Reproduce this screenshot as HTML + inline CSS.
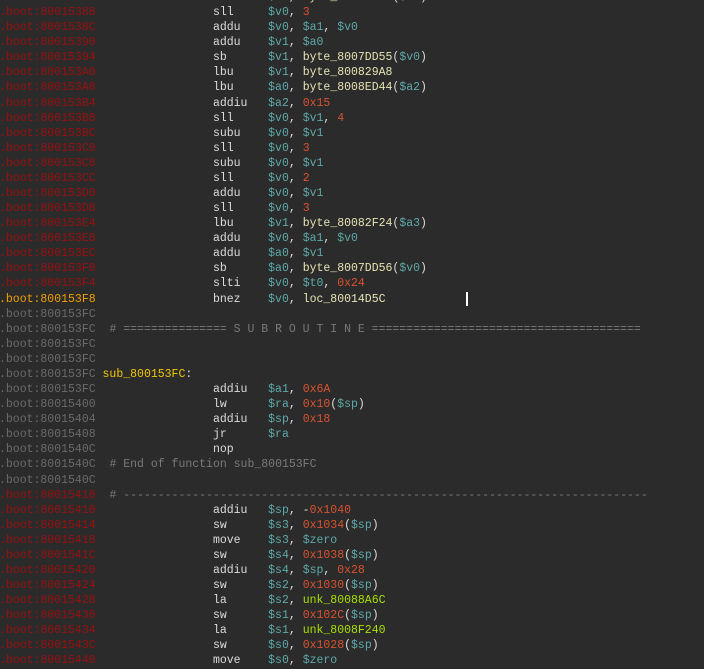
<!DOCTYPE html>
<html><head><meta charset="utf-8"><style>
html,body{margin:0;padding:0;background:#2b2b2b;width:704px;height:666px;overflow:hidden}
#c{position:absolute;left:-1px;top:-10px;font-family:"Liberation Mono",monospace;font-size:11.5px;line-height:15.08px;white-space:pre;color:#dcdcdc}
.r{color:#9a0f0f}.g{color:#6a6a6a}.o{color:#f0a000}
.m{color:#dcdcdc}.x{color:#5fa9a9}.n{color:#d9522f}.y{color:#e6e3b2}.u{color:#a8e000}.l{color:#f0c800}.k{color:#7a7a7a}
#cur{position:absolute;left:466px;top:292px;width:2px;height:14px;background:#fff}
</style></head><body><div id="c"><span class="r">.boot:8001537C</span>                 <span class="m">lbu</span>     <span class="x">$v1</span>, <span class="y">byte_8008ED43</span>(<span class="x">$a2</span>)
<span class="r">.boot:80015388</span>                 sll     <span class="x">$v0</span>, <span class="n">3</span>
<span class="r">.boot:8001538C</span>                 addu    <span class="x">$v0</span>, <span class="x">$a1</span>, <span class="x">$v0</span>
<span class="r">.boot:80015390</span>                 addu    <span class="x">$v1</span>, <span class="x">$a0</span>
<span class="r">.boot:80015394</span>                 sb      <span class="x">$v1</span>, <span class="y">byte_8007DD55</span>(<span class="x">$v0</span>)
<span class="r">.boot:800153A0</span>                 lbu     <span class="x">$v1</span>, <span class="y">byte_800829A8</span>
<span class="r">.boot:800153A8</span>                 lbu     <span class="x">$a0</span>, <span class="y">byte_8008ED44</span>(<span class="x">$a2</span>)
<span class="r">.boot:800153B4</span>                 addiu   <span class="x">$a2</span>, <span class="n">0x15</span>
<span class="r">.boot:800153B8</span>                 sll     <span class="x">$v0</span>, <span class="x">$v1</span>, <span class="n">4</span>
<span class="r">.boot:800153BC</span>                 subu    <span class="x">$v0</span>, <span class="x">$v1</span>
<span class="r">.boot:800153C0</span>                 sll     <span class="x">$v0</span>, <span class="n">3</span>
<span class="r">.boot:800153C8</span>                 subu    <span class="x">$v0</span>, <span class="x">$v1</span>
<span class="r">.boot:800153CC</span>                 sll     <span class="x">$v0</span>, <span class="n">2</span>
<span class="r">.boot:800153D0</span>                 addu    <span class="x">$v0</span>, <span class="x">$v1</span>
<span class="r">.boot:800153D8</span>                 sll     <span class="x">$v0</span>, <span class="n">3</span>
<span class="r">.boot:800153E4</span>                 lbu     <span class="x">$v1</span>, <span class="y">byte_80082F24</span>(<span class="x">$a3</span>)
<span class="r">.boot:800153E8</span>                 addu    <span class="x">$v0</span>, <span class="x">$a1</span>, <span class="x">$v0</span>
<span class="r">.boot:800153EC</span>                 addu    <span class="x">$a0</span>, <span class="x">$v1</span>
<span class="r">.boot:800153F0</span>                 sb      <span class="x">$a0</span>, <span class="y">byte_8007DD56</span>(<span class="x">$v0</span>)
<span class="r">.boot:800153F4</span>                 slti    <span class="x">$v0</span>, <span class="x">$t0</span>, <span class="n">0x24</span>
<span class="o">.boot:800153F8</span>                 bnez    <span class="x">$v0</span>, <span class="y">loc_80014D5C</span>
<span class="g">.boot:800153FC</span>
<span class="g">.boot:800153FC</span>  <span class="k"># =============== S U B R O U T I N E =======================================</span>
<span class="g">.boot:800153FC</span>
<span class="g">.boot:800153FC</span>
<span class="g">.boot:800153FC</span> <span class="l">sub_800153FC</span>:
<span class="g">.boot:800153FC</span>                 addiu   <span class="x">$a1</span>, <span class="n">0x6A</span>
<span class="g">.boot:80015400</span>                 lw      <span class="x">$ra</span>, <span class="n">0x10</span>(<span class="x">$sp</span>)
<span class="g">.boot:80015404</span>                 addiu   <span class="x">$sp</span>, <span class="n">0x18</span>
<span class="g">.boot:80015408</span>                 jr      <span class="x">$ra</span>
<span class="g">.boot:8001540C</span>                 nop
<span class="g">.boot:8001540C</span>  <span class="k"># End of function sub_800153FC</span>
<span class="g">.boot:8001540C</span>
<span class="r">.boot:80015410</span>  <span class="k"># ----------------------------------------------------------------------------</span>
<span class="r">.boot:80015410</span>                 addiu   <span class="x">$sp</span>, -<span class="n">0x1040</span>
<span class="r">.boot:80015414</span>                 sw      <span class="x">$s3</span>, <span class="n">0x1034</span>(<span class="x">$sp</span>)
<span class="r">.boot:80015418</span>                 move    <span class="x">$s3</span>, <span class="x">$zero</span>
<span class="r">.boot:8001541C</span>                 sw      <span class="x">$s4</span>, <span class="n">0x1038</span>(<span class="x">$sp</span>)
<span class="r">.boot:80015420</span>                 addiu   <span class="x">$s4</span>, <span class="x">$sp</span>, <span class="n">0x28</span>
<span class="r">.boot:80015424</span>                 sw      <span class="x">$s2</span>, <span class="n">0x1030</span>(<span class="x">$sp</span>)
<span class="r">.boot:80015428</span>                 la      <span class="x">$s2</span>, <span class="u">unk_80088A6C</span>
<span class="r">.boot:80015430</span>                 sw      <span class="x">$s1</span>, <span class="n">0x102C</span>(<span class="x">$sp</span>)
<span class="r">.boot:80015434</span>                 la      <span class="x">$s1</span>, <span class="u">unk_8008F240</span>
<span class="r">.boot:8001543C</span>                 sw      <span class="x">$s0</span>, <span class="n">0x1028</span>(<span class="x">$sp</span>)
<span class="r">.boot:80015440</span>                 move    <span class="x">$s0</span>, <span class="x">$zero</span>
</div><div id="cur"></div></body></html>
